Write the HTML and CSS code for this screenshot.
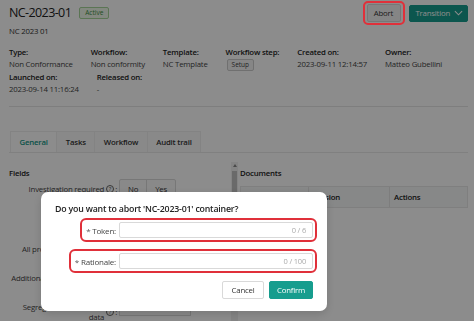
FILE: index.html
```html
<!DOCTYPE html>
<html lang="en">
<head>
<meta charset="utf-8">
<title>NC-2023-01</title>
<link rel="stylesheet" href="styles.css">
</head>
<body>
<div class="page">
  <header class="head">
    <div class="head-top">
      <div class="title-wrap">
        <h1 class="title">NC-2023-01</h1>
        <span class="badge">Active</span>
      </div>
      <div class="actions">
        <span class="mark mark-abort"><button class="btn">Abort</button></span>
        <button class="btn btn-primary">Transition
          <svg class="chev" viewBox="0 0 10 6" width="9" height="6"><path d="M1 1l4 4 4-4" fill="none" stroke="currentColor" stroke-width="1.2"/></svg>
        </button>
      </div>
    </div>
    <div class="subtitle">NC 2023 01</div>
    <dl class="meta">
      <div class="meta-item"><dt>Type:</dt><dd>Non Conformance</dd></div>
      <div class="meta-item"><dt>Workflow:</dt><dd>Non conformity</dd></div>
      <div class="meta-item"><dt>Template:</dt><dd>NC Template</dd></div>
      <div class="meta-item"><dt>Workflow step:</dt><dd><span class="tag">Setup</span></dd></div>
      <div class="meta-item"><dt>Created on:</dt><dd>2023-09-11 12:14:57</dd></div>
      <div class="meta-item"><dt>Owner:</dt><dd>Matteo Gubellini</dd></div>
      <div class="meta-item"><dt>Launched on:</dt><dd>2023-09-14 11:16:24</dd></div>
      <div class="meta-item"><dt>Released on:</dt><dd>-</dd></div>
    </dl>
  </header>

  <nav class="tabs">
    <span class="tab tab-active">General</span>
    <span class="tab">Tasks</span>
    <span class="tab">Workflow</span>
    <span class="tab">Audit trail</span>
  </nav>

  <main class="content">
    <section class="fields">
      <h2 class="sec-title">Fields</h2>
      <div class="field f1">
        <div class="flabel"><span>Investigation required</span><span class="info">?</span>:</div>
        <div class="seg"><span>No</span><span>Yes</span></div>
      </div>
      <div class="field f2">
        <div class="flabel"><span>All product lots involved</span><span class="info">?</span>:</div>
        <div class="seg"><span>No</span><span>Yes</span></div>
      </div>
      <div class="field f3">
        <div class="flabel"><span>Additional documents needed</span>:</div>
        <div class="finput"></div>
      </div>
      <div class="field f4">
        <div class="flabel"><span class="wrap">Segregation of sensitive data</span><span class="info">?</span>:</div>
        <div class="finput small"></div>
      </div>
    </section>
    <div class="scrollbar"><span class="sb-arrow"></span><span class="sb-thumb"></span></div>
    <section class="docs">
      <h2 class="sec-title">Documents</h2>
      <div class="table">
        <div class="th th-name">Name</div>
        <div class="th th-ver">Version</div>
        <div class="th th-act">Actions</div>
      </div>
    </section>
  </main>
</div>

<div class="overlay"></div>

<div class="modal-layer">
  <div class="modal">
    <h3 class="modal-title">Do you want to abort 'NC-2023-01' container?</h3>
    <div class="form-row mark-row row-token">
      <label class="flbl"><span class="req">*</span> Token:</label>
      <div class="inp"><span class="count">0 / 6</span></div>
    </div>
    <div class="form-row mark-row row-rat">
      <label class="flbl"><span class="req">*</span> Rationale:</label>
      <div class="inp"><span class="count">0 / 100</span></div>
    </div>
    <div class="modal-foot">
      <button class="btn mbtn">Cancel</button>
      <button class="btn btn-primary mbtn">Confirm</button>
    </div>
  </div>
</div>
</body>
</html>
```

FILE: styles.css
```css
* { box-sizing: border-box; }
html, body { margin: 0; padding: 0; }
body {
  width: 474px;
  height: 321px;
  overflow: hidden;
  background: #fff;
  font-family: "Open Sans", "Noto Sans", sans-serif;
  font-size: 7.8px;
  letter-spacing: -0.2px;
  color: #333;
}
button { font-family: inherit; letter-spacing: inherit; }

.page { padding: 0 6px 0 9px; }

.head { padding-top: 2px; border-bottom: 1px solid #e6e6e6; padding-bottom: 11px; }
.head-top { display: flex; justify-content: space-between; align-items: center; height: 22px; }
.title-wrap { display: flex; align-items: center; gap: 8px; }
.title { margin: 0; font-size: 12.5px; font-weight: 400; color: #222; line-height: 20px; letter-spacing: -0.6px; }
.badge {
  font-size: 6.5px; line-height: 10px; padding: 0 5px; letter-spacing: 0;
  color: #3d8f3d; background: #eef8ea; border: 1px solid #a7d69a; border-radius: 2px;
}
.actions { display: flex; align-items: center; gap: 8px; }
.btn {
  height: 18px; padding: 0 8px; font-size: 7.8px; line-height: 16px;
  border: 1px solid #d9d9d9; border-radius: 2px; background: #f3f3f3; color: #333;
}
.btn-primary { background: #169d8e; border-color: #169d8e; color: #fff; display: inline-flex; align-items: center; gap: 4px; padding: 0 4px 0 6px; height: 17px; }
.chev { display: block; }
.mark { position: relative; display: inline-block; }
.mark-abort::after {
  content: ""; position: absolute; left: -4px; right: -4px; top: -3px; bottom: -3px;
  border: 2px solid #e0303a; border-radius: 5px; z-index: 20;
}
.mark-abort .btn { width: 34px; padding: 0; display: block; }

.subtitle { margin-top: 1px; line-height: 12px; color: #333; }
.meta { display: flex; flex-wrap: wrap; column-gap: 18px; margin: 9px 0 0; }
.meta-item { line-height: 12px; }
.meta dt { color: #222; font-weight: 600; }
.meta dd { margin: 0; color: #444; }
.tag { display: inline-block; font-size: 6.5px; line-height: 10px; padding: 0 4px; border: 1px solid #ccc; background: #f5f5f5; border-radius: 2px; margin-left: 1px; letter-spacing: 0; }

.tabs {
  display: flex; margin-top: 24px; padding-left: 1px;
  border-bottom: 1px solid #eaeaea; height: 22px;
}
.tab { padding: 0 8.5px; line-height: 21px; font-weight: 600; color: #333; border: 1px solid #eeeeee; border-bottom: 0; margin-right: -1px; background: #fafafa; }
.tab-active { color: #159685; background: #fff; }

.content { display: flex; margin-top: 13px; height: 160px; }
.fields { width: 222px; }
.sec-title { margin: 0; font-size: 7.8px; font-weight: 600; line-height: 14px; color: #222; }
.field { display: flex; align-items: center; }
.flabel { width: 110px; flex: none; display: flex; justify-content: flex-end; align-items: center; color: #444; padding-right: 2px; white-space: nowrap; }
.flabel .wrap { width: 86px; text-align: right; line-height: 10px; white-space: normal; }
.info { display: inline-block; width: 8px; height: 8px; border: 1px solid #666; border-radius: 50%; font-size: 6px; line-height: 6px; text-align: center; margin: 0 1px 0 2px; letter-spacing: 0; }
.seg { display: flex; height: 20px; border: 1px solid #d9d9d9; border-radius: 2px; background: #fafafa; }
.seg span { padding: 0 8px; line-height: 18px; color: #333; }
.seg span + span { border-left: 1px solid #d9d9d9; }
.f1 { height: 22px; margin-top: -2px; }
.f2 { margin-top: 38px; height: 22px; }
.f3 { margin-top: 7px; height: 22px; }
.f4 { margin-top: 12px; height: 24px; align-items: flex-start; }
.f4 .flabel { padding-top: 1px; }
.f4 .finput { margin-top: 2px; }
.finput { width: 110px; height: 16px; border: 1px solid #d9d9d9; background: #fafafa; }
.finput.small { width: 72px; height: 13px; }

.scrollbar { width: 7px; margin-top: -4px; background: #f1f1f1; display: flex; flex-direction: column; align-items: center; }
.sb-arrow { width: 0; height: 0; border-left: 2px solid transparent; border-right: 2px solid transparent; border-bottom: 3px solid #888; margin: 2px 0; }
.sb-thumb { width: 5px; height: 60px; background: #c1c1c1; margin-top: 2px; }
.docs { flex: 1; padding-left: 2px; }
.table { display: flex; margin-top: 6px; border: 1px solid #e8e8e8; background: #f6f7f8; height: 22px; }
.th { line-height: 20px; font-weight: 600; color: #222; padding-left: 4px; }
.th-name { width: 68px; border-right: 1px solid #e3e3e3; }
.th-ver { width: 81px; border-right: 1px solid #e3e3e3; }
.th-act { flex: 1; }

.overlay { position: fixed; inset: 0; background: rgba(0,0,0,0.45); z-index: 10; }

.modal-layer { position: fixed; inset: 0; z-index: 15; }
.modal {
  position: absolute; left: 41px; top: 192px; width: 286px; height: 119px;
  background: #fff; border-radius: 7px; padding: 10px 14px 0 14px;
  display: flex; flex-direction: column;
  box-shadow: 0 3px 10px rgba(0,0,0,0.15);
}
.modal-title { margin: 0; font-size: 8.8px; font-weight: 600; line-height: 14px; color: #222; letter-spacing: -0.2px; }
.form-row { display: flex; align-items: center; justify-content: flex-end; align-self: flex-end; margin-right: -4px; }
.mark-row { border: 2px solid #e0303a; border-radius: 6px; padding: 2px 2px 2px 4px; }
.row-token { margin-top: 2px; }
.row-rat { margin-top: 7px; }
.flbl { color: #444; font-size: 8px; margin-right: 3px; white-space: nowrap; }
.req { color: #555; }
.inp { width: 194px; height: 16px; border: 1px solid #d9d9d9; border-radius: 2px; display: flex; align-items: center; justify-content: flex-end; padding-right: 6px; }
.count { font-size: 7.5px; color: #aaa; }
.modal-foot { display: flex; justify-content: flex-end; gap: 5px; margin-top: 8px; }
.mbtn { height: 18px; padding: 0 8.5px; background: #fff; font-size: 7.8px; }
.mbtn.btn-primary { background: #169d8e; padding: 0 7px; height: 18px; }
```
